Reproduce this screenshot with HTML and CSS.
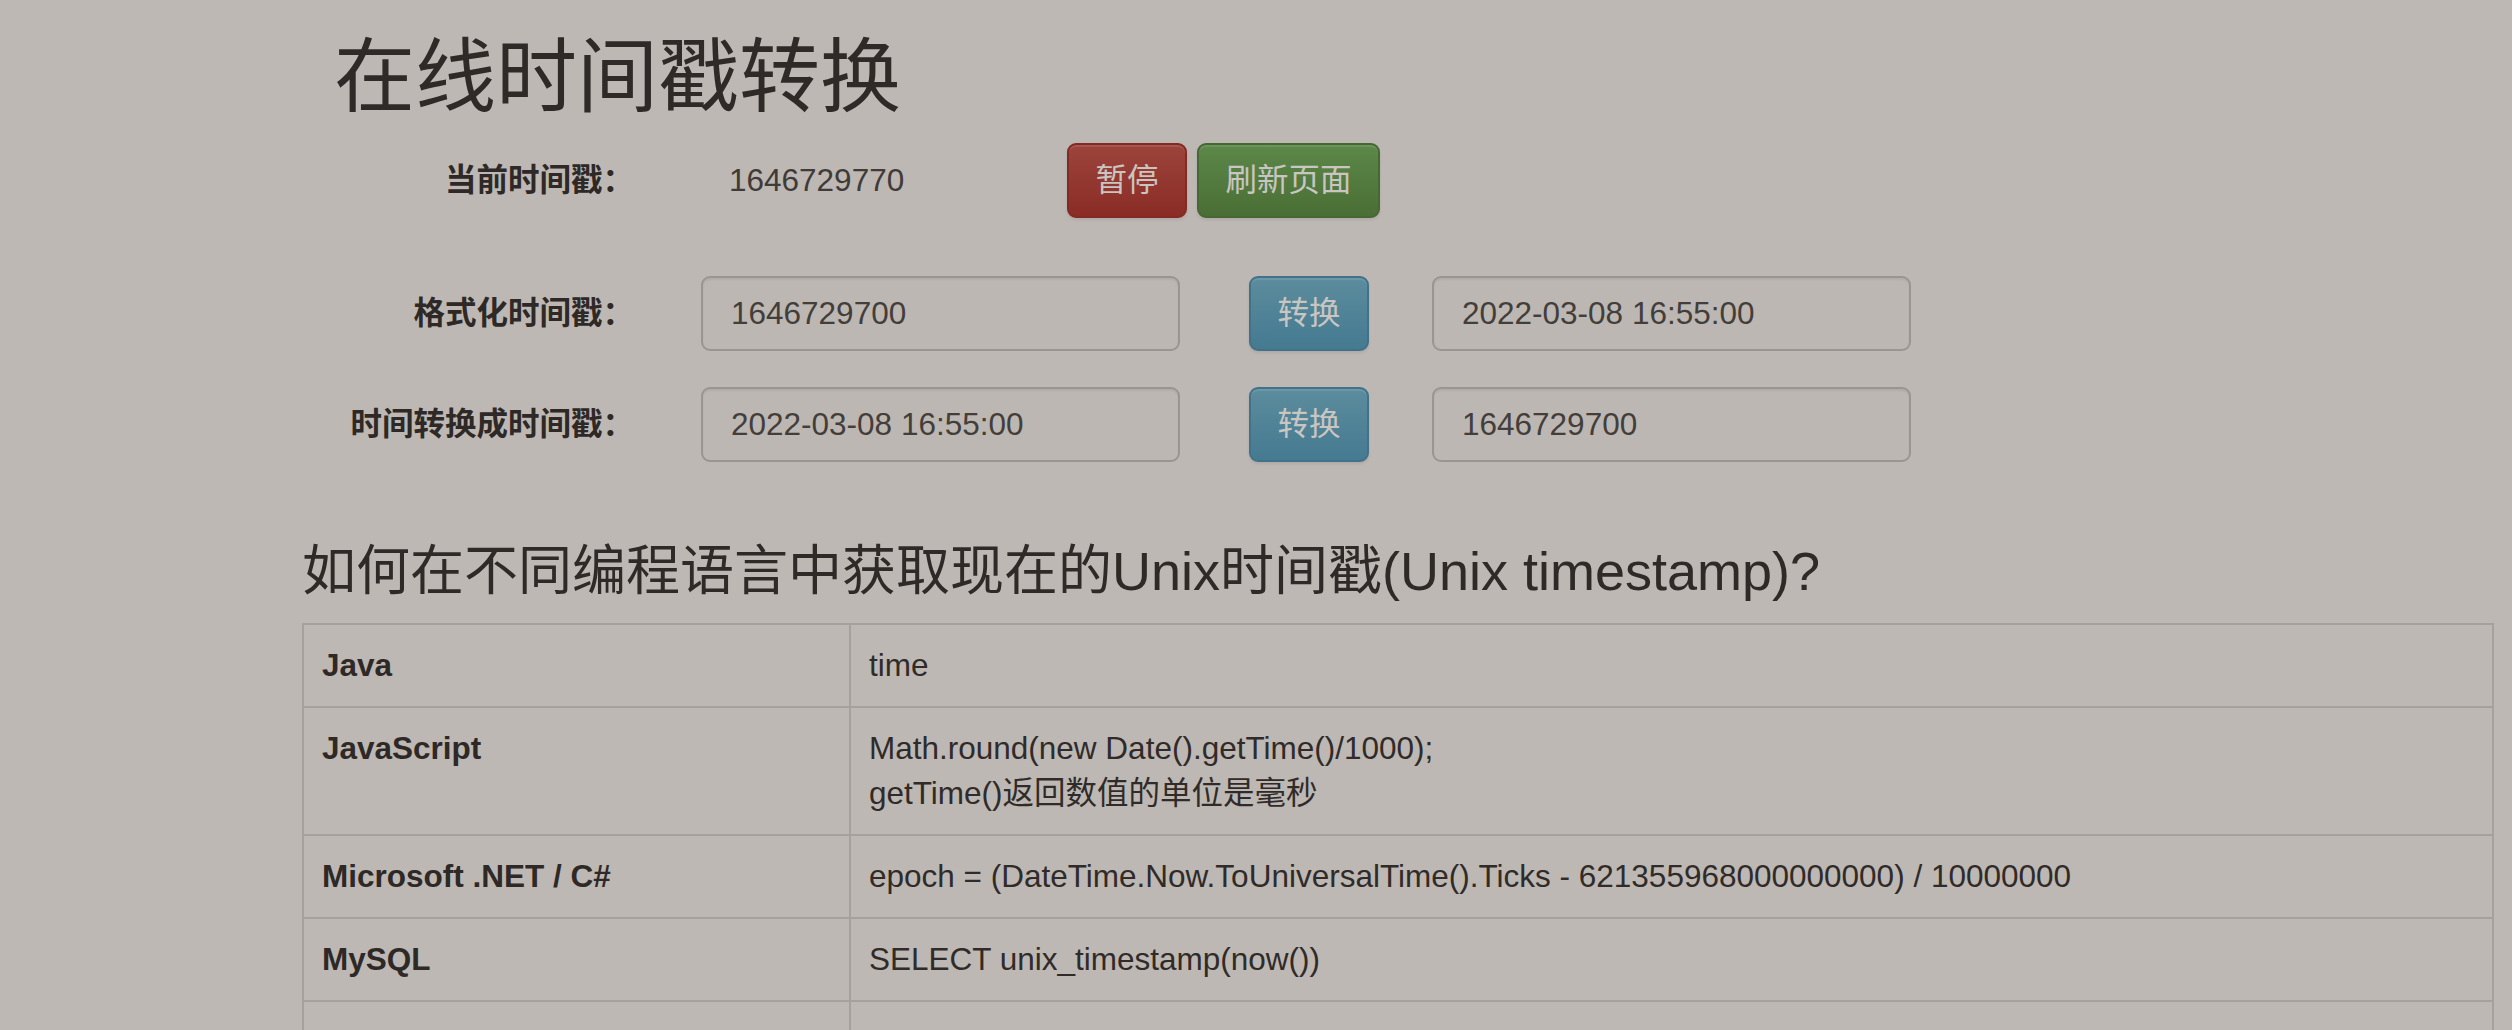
FILE: index.html
```html
<!DOCTYPE html>
<html lang="zh-CN">
<head>
<meta charset="utf-8">
<title>在线时间戳转换</title>
<link rel="stylesheet" href="styles.css">
</head>
<body>
<div class="page">
  <h1 class="title">在线时间戳转换</h1>

  <div class="form">
    <div class="row">
      <div class="label">当前时间戳：</div>
      <div class="value">1646729770</div>
      <div class="btns">
        <button class="btn btn-danger" type="button">暂停</button>
        <button class="btn btn-success" type="button">刷新页面</button>
      </div>
    </div>

    <div class="row row-first">
      <div class="label">格式化时间戳：</div>
      <input class="field" type="text" value="1646729700">
      <button class="btn btn-info" type="button">转换</button>
      <input class="field field-out" type="text" value="2022-03-08 16:55:00">
    </div>

    <div class="row row-second">
      <div class="label">时间转换成时间戳：</div>
      <input class="field" type="text" value="2022-03-08 16:55:00">
      <button class="btn btn-info" type="button">转换</button>
      <input class="field field-out" type="text" value="1646729700">
    </div>
  </div>

  <h2 class="subtitle">如何在不同编程语言中获取现在的Unix时间戳(Unix timestamp)?</h2>

  <table class="codes">
    <colgroup>
      <col class="col-lang">
      <col>
    </colgroup>
    <tbody>
      <tr><td class="lang">Java</td><td>time</td></tr>
      <tr><td class="lang">JavaScript</td><td>Math.round(new Date().getTime()/1000);<br>getTime()返回数值的单位是毫秒</td></tr>
      <tr><td class="lang">Microsoft .NET / C#</td><td>epoch = (DateTime.Now.ToUniversalTime().Ticks - 621355968000000000) / 10000000</td></tr>
      <tr><td class="lang">MySQL</td><td>SELECT unix_timestamp(now())</td></tr>
      <tr><td class="lang">Perl</td><td>time</td></tr>
    </tbody>
  </table>
</div>
</body>
</html>
```

FILE: styles.css
```css
html {
  overflow: hidden;
}

body {
  margin: 0;
  background: #bdb8b4;
  color: #302b28;
  font-family: "Liberation Sans", "Noto Sans CJK SC", sans-serif;
  font-size: 31.5px;
}

.page {
  margin-left: 302px;
  width: 2192px;
}

.title {
  margin: 17px 0 0 32px;
  height: 120px;
  line-height: 120px;
  font-size: 81px;
  font-weight: 400;
  color: #2f2a27;
}

.form {
  margin-top: 6px;
}

.row {
  display: flex;
  align-items: center;
  height: 75px;
}

.row-first {
  margin-top: 58px;
}

.row-second {
  margin-top: 36px;
}

.label {
  width: 332px;
  text-align: right;
  font-weight: 700;
  line-height: 75px;
  color: #2e2926;
}

.value {
  box-sizing: border-box;
  width: 366px;
  margin-left: 67px;
  padding-left: 28px;
  line-height: 75px;
  color: #403b38;
}

.btns {
  display: flex;
  gap: 10px;
}

.btn {
  box-sizing: border-box;
  height: 75px;
  padding: 0 26.5px;
  border: 2px solid;
  border-radius: 9px;
  font-family: "Liberation Sans", "Noto Sans CJK SC", sans-serif;
  font-size: 31.5px;
  line-height: 71px;
  color: #c9c5c1;
  box-shadow: inset 0 2px 0 rgba(255, 255, 255, 0.1), 0 2px 3px rgba(0, 0, 0, 0.08);
  cursor: pointer;
}

.btn-danger {
  width: 120px;
  background: linear-gradient(#9c443c, #8a2c25);
  border-color: #822a23;
}

.btn-success {
  width: 183px;
  background: linear-gradient(#5c8849, #4a6e35);
  border-color: #466833;
}

.btn-info {
  width: 120px;
  margin-left: 69px;
  background: linear-gradient(#5c8c9d, #457a91);
  border-color: #417289;
}

.field {
  box-sizing: border-box;
  width: 479px;
  height: 75px;
  margin: 0 0 0 67px;
  padding: 0 28px;
  border: 2px solid #9a9592;
  border-radius: 9px;
  background: #bcb7b3;
  box-shadow: inset 0 2px 2px rgba(0, 0, 0, 0.06);
  font-family: "Liberation Sans", "Noto Sans CJK SC", sans-serif;
  font-size: 31.5px;
  color: #433e3a;
  outline: none;
}

.field-out {
  margin-left: 63px;
}

.subtitle {
  margin: 79px 0 0;
  height: 60px;
  line-height: 60px;
  font-size: 54px;
  font-weight: 400;
  color: #2f2a27;
  white-space: nowrap;
}

.codes {
  margin-top: 22px;
  width: 2192px;
  border-collapse: collapse;
  table-layout: fixed;
  border: 2px solid #a6a19d;
}

.col-lang {
  width: 547px;
}

.codes td {
  padding: 18px;
  border: 2px solid #a6a19d;
  line-height: 45px;
  vertical-align: top;
  color: #302b28;
}

.codes td.lang {
  font-weight: 700;
  color: #2e2926;
}
```
